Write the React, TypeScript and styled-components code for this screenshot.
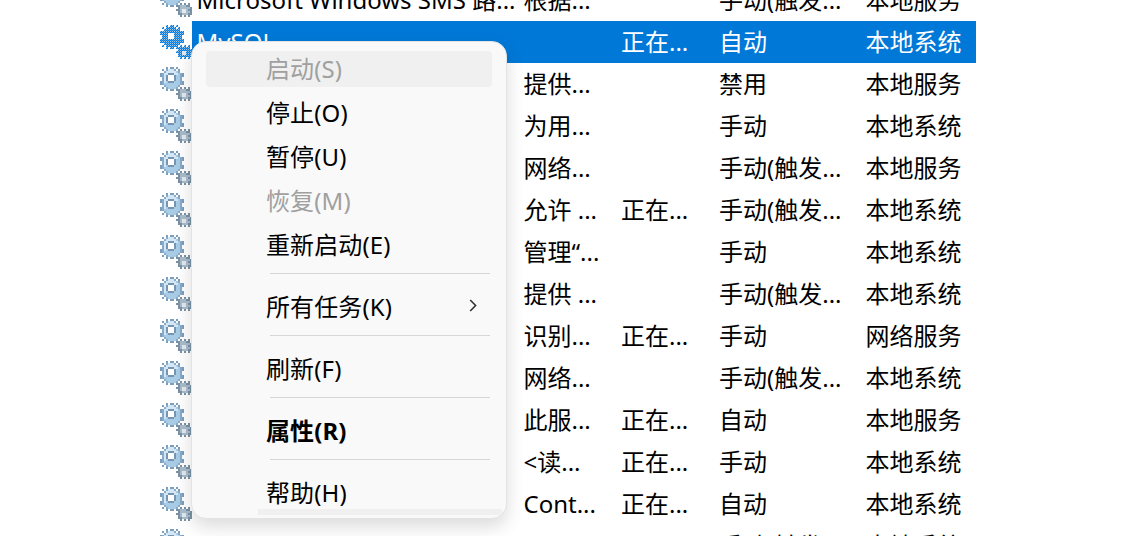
import React from "react";
import styled, { createGlobalStyle } from "styled-components";

const Global = createGlobalStyle`
  html, body { margin: 0; padding: 0; background: #fff; }
  body { width: 1123px; height: 536px; overflow: hidden; }
`;

const Page = styled.div`
  position: relative;
  width: 1123px;
  height: 536px;
  overflow: hidden;
  background: #fff;
  font-family: "Noto Sans", "Noto Sans CJK SC", sans-serif;
  font-size: 24px;
  color: #000;
`;

const ServiceList = styled.div`
  display: flex;
  flex-direction: column;
  width: 816px;
  margin: -21px 0 0 160px;
`;

const Row = styled.div`
  display: flex;
  height: 42px;
`;

const IconSlot = styled.div`
  flex: 0 0 32px;
  height: 42px;
  overflow: visible;
`;

const Fields = styled.div<{ $selected?: boolean }>`
  flex: 1;
  display: grid;
  grid-template-columns: 331.5px 97.5px 98px 146.5px 110.5px;
  align-items: center;
  height: 42px;
  background: ${(p) => (p.$selected ? "#0078d7" : "transparent")};
  color: ${(p) => (p.$selected ? "#fff" : "#000")};
`;

const Cell = styled.div`
  white-space: nowrap;
  line-height: 42px;
  height: 42px;
  overflow: hidden;
`;

const NameCell = styled(Cell)`
  padding-left: 4.5px;
`;

const Menu = styled.div`
  position: absolute;
  left: 191px;
  top: 41px;
  display: flex;
  flex-direction: column;
  box-sizing: border-box;
  width: 316px;
  height: 478px;
  padding: 5px 14px 0;
  background: #f9f9f9;
  border: 1px solid #e3e3e3;
  border-radius: 15px;
  box-shadow: 0 8px 18px rgba(0, 0, 0, 0.14);
`;

const MenuItem = styled.div<{ $disabled?: boolean; $active?: boolean; $bold?: boolean }>`
  flex: 0 0 36px;
  display: flex;
  align-items: center;
  justify-content: space-between;
  box-sizing: border-box;
  height: 36px;
  margin: 4px 0;
  padding: 0 15px 3px 60px;
  border-radius: 4px;
  background: ${(p) => (p.$active ? "#f0f0f0" : "transparent")};
  color: ${(p) => (p.$disabled ? "#a0a0a0" : "#000")};
  font-weight: ${(p) => (p.$bold ? 700 : 400)};
  letter-spacing: 0.12px;
  white-space: nowrap;
`;

const Separator = styled.div`
  flex: 0 0 1px;
  margin: 6px 2px 11px 64px;
  background: #d6d6d6;
`;

const ScrollBand = styled.div`
  position: absolute;
  left: 66px;
  top: 467px;
  width: 244px;
  height: 6px;
  background: #f0f0f0;
`;

const CELL = 2;
const GEAR_MAP = [
  "...d.dd.d.......",
  ".d.mlllm.d......",
  "..mlllllbm......",
  "dmllsssllbmd....",
  "dmlswwwsbbmd....",
  ".mlswwwsbbm.....",
  ".mlswwwsbbm.....",
  "dmlbsssbbbmd....",
  "dmbbbbbbbbmd....",
  "..mbbbbbbm......",
  ".d.mbbbbm.g.g.g.",
  "...d.dd.gghhhgg.",
  ".........ghhhhhg",
  "........gghpphgg",
  ".........ghpphhg",
  ".........gghhhgg",
  "..........g.g.g.",
];

const COLORS: Record<string, string> = {
  d: "#7d9dbc",
  m: "#86abcb",
  l: "#d3e6f4",
  b: "#a8cbe6",
  s: "#7595b3",
  w: "#ffffff",
  g: "#7a92a6",
  h: "#a9bccb",
  p: "#e2eaf0",
};

const GearSvg = styled.svg`
  display: block;
  margin-top: 4px;
`;

function Gear({ selected, id }: { selected?: boolean; id: string }) {
  const w = GEAR_MAP[0].length * CELL;
  const h = GEAR_MAP.length * CELL;
  return (
    <GearSvg width={w} height={h} viewBox={`0 0 ${w} ${h}`} shapeRendering="crispEdges">
      {selected && (
        <defs>
          <pattern id={id} width="2" height="2" patternUnits="userSpaceOnUse">
            <rect width="2" height="2" fill="#0c7dd8" />
            <rect width="1" height="1" fill="#9ccaee" />
            <rect x="1" y="1" width="1" height="1" fill="#3f98e0" />
          </pattern>
        </defs>
      )}
      {GEAR_MAP.map((line, y) =>
        line.split("").map((ch, x) =>
          ch === "." ? null : (
            <rect
              key={`${x}-${y}`}
              x={x * CELL}
              y={y * CELL}
              width={CELL}
              height={CELL}
              fill={selected && ch !== "w" && ch !== "p" ? `url(#${id})` : COLORS[ch]}
            />
          )
        )
      )}
    </GearSvg>
  );
}

function Chevron() {
  return (
    <svg width="8" height="13" viewBox="0 0 8 13" fill="none">
      <path d="M1.2 1 L6.6 6.5 L1.2 12" stroke="#333" strokeWidth="1.6" />
    </svg>
  );
}

const rows: [string, string, string, string, string][] = [
  ["Microsoft Windows SMS 路...", "根据...", "", "手动(触发...", "本地服务"],
  ["MySQL", "", "正在...", "自动", "本地系统"],
  ["", "提供...", "", "禁用", "本地服务"],
  ["", "为用...", "", "手动", "本地系统"],
  ["", "网络...", "", "手动(触发...", "本地服务"],
  ["", "允许 ...", "正在...", "手动(触发...", "本地系统"],
  ["", "管理“...", "", "手动", "本地系统"],
  ["", "提供 ...", "", "手动(触发...", "本地系统"],
  ["", "识别...", "正在...", "手动", "网络服务"],
  ["", "网络...", "", "手动(触发...", "本地系统"],
  ["", "此服...", "正在...", "自动", "本地服务"],
  ["", "<读...", "正在...", "手动", "本地系统"],
  ["", "Cont...", "正在...", "自动", "本地系统"],
  ["NVIDIA FrameView SDK ...", "NVI...", "", "手动(触发...", "本地系统"],
];

export default function App() {
  return (
    <Page>
      <Global />
      <ServiceList>
        {rows.map((r, i) => (
          <Row key={i}>
            <IconSlot>
              <Gear selected={i === 1} id={`dither-${i}`} />
            </IconSlot>
            <Fields $selected={i === 1}>
              <NameCell>{r[0]}</NameCell>
              <Cell>{r[1]}</Cell>
              <Cell>{r[2]}</Cell>
              <Cell>{r[3]}</Cell>
              <Cell>{r[4]}</Cell>
            </Fields>
          </Row>
        ))}
      </ServiceList>
      <Menu>
        <MenuItem $disabled $active>启动(S)</MenuItem>
        <MenuItem>停止(O)</MenuItem>
        <MenuItem>暂停(U)</MenuItem>
        <MenuItem $disabled>恢复(M)</MenuItem>
        <MenuItem>重新启动(E)</MenuItem>
        <Separator />
        <MenuItem>
          所有任务(K)
          <Chevron />
        </MenuItem>
        <Separator />
        <MenuItem>刷新(F)</MenuItem>
        <Separator />
        <MenuItem $bold>属性(R)</MenuItem>
        <Separator />
        <MenuItem>帮助(H)</MenuItem>
        <ScrollBand />
      </Menu>
    </Page>
  );
}
